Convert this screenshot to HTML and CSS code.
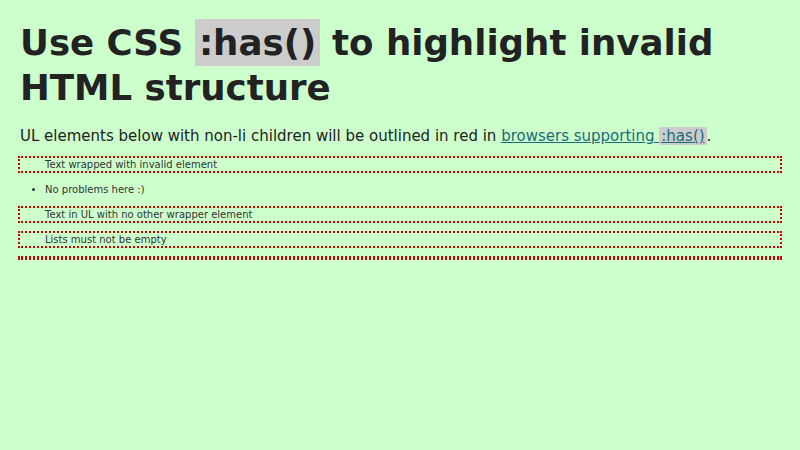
FILE: index.html
```html
<!DOCTYPE html>
<html>
<head>
<meta charset="utf-8">
<link rel="stylesheet" href="styles.css">
</head>
<body>
<h1 class="title">Use CSS <code class="code">:has()</code> to highlight invalid HTML structure</h1>
<p class="intro">UL elements below with non-li children will be outlined in red in <a class="link" href="#">browsers supporting <code class="code">:has()</code></a>.</p>
<ul class="list invalid"><div class="item">Text wrapped with invalid element</div></ul>
<ul class="list"><li class="item">No problems here :)</li></ul>
<ul class="list invalid"><span class="item">Text in UL with no other wrapper element</span></ul>
<ul class="list invalid"><div class="item">Lists must not be empty</div></ul>
<ul class="list invalid"></ul>
</body>
</html>
```
FILE: styles.css
```css
html {
  background: #ccffcc;
}
body {
  margin: 0;
  padding: 20px;
  min-height: 410px;
  background: #ccffcc;
  color: #222;
  font-family: "DejaVu Sans", sans-serif;
}
.title {
  font-size: 35.6px;
  font-weight: bold;
  margin: 0 0 17px;
  line-height: 45px;
}
.code {
  font-family: "DejaVu Sans", sans-serif;
  background: #cccccc;
  padding: 3px 3.5px;
}
.intro {
  font-size: 15px;
  line-height: 18px;
  margin: 0 0 11px;
}
.link {
  color: #1a6b78;
}
.intro .code {
  padding: 0 2px;
}
.list {
  font-size: 10px;
  line-height: 13px;
  margin: 8px -2px;
  padding: 0 0 0 25px;
  border: 2px dotted transparent;
  color: #333;
}
.invalid {
  border-color: #cc0000;
}
.item {
  display: block;
}
li.item {
  display: list-item;
}
span.item {
  display: inline;
}
```
